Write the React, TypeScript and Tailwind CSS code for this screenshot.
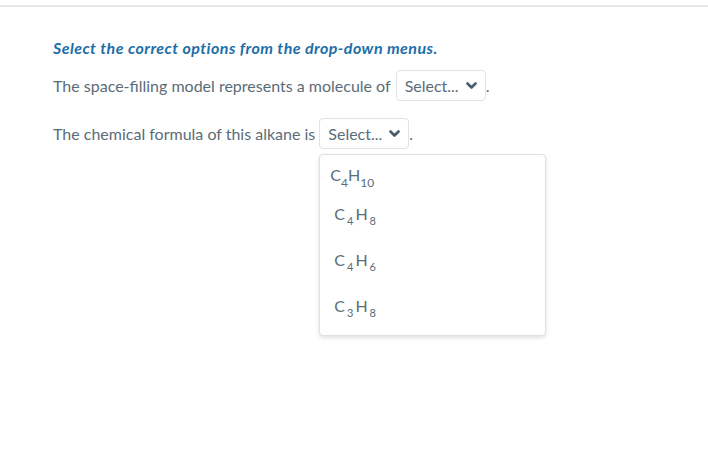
function Formula({ c, h, spaced }: { c: string; h: string; spaced?: boolean }) {
  if (!spaced) {
    return (
      <span>
        C<sub className="text-[12px] align-[-3px]">{c}</sub>H<sub className="text-[12px] align-[-3px]">{h}</sub>
      </span>
    );
  }
  return (
    <span>
      C<sub className="text-[11px] align-[-2px] ml-[2px] mr-[2px]">{c}</sub>H<sub className="text-[11px] align-[-2px] ml-[2px]">{h}</sub>
    </span>
  );
}

function Chevron() {
  return (
    <svg width="11" height="8" viewBox="0 0 11 8" className="text-[#4b5b67]">
      <polyline points="1.5,1.5 5.5,5.5 9.5,1.5" fill="none" stroke="currentColor" strokeWidth="2.6" strokeLinecap="round" strokeLinejoin="round" />
    </svg>
  );
}

function SelectBox() {
  return (
    <span className="inline-flex items-center justify-between w-[90px] h-[31px] pl-[8px] pr-[8px] border border-[#e3e3e3] rounded-[4px] bg-white text-[#5b6c79]">
      Select...
      <Chevron />
    </span>
  );
}

export default function App() {
  return (
    <div className="w-[708px] h-[466px] bg-white font-['Lato',sans-serif]">
      <div className="pt-[5px]">
        <div className="h-[2px] bg-[#e8e8e8]" />
      </div>
      <div className="pl-[53px] pt-[31px]">
        <h2 className="text-[16px] font-bold italic tracking-[0.45px] text-[#1e6ea7] leading-[20px]">
          Select the correct options from the drop-down menus.
        </h2>
        <p className="mt-[12px] text-[16px] text-[#5b6c79] flex items-center">
          The space-filling model represents a molecule of
          <span className="ml-[5px]">
            <SelectBox />
          </span>
          <span>.</span>
        </p>
        <p className="mt-[17px] text-[16px] text-[#5b6c79] flex items-center">
          The chemical formula of this alkane is
          <span className="relative ml-[4px]">
            <SelectBox />
            <div className="absolute left-0 top-[36px] w-[227px] h-[182px] border border-[#e0e0e0] rounded-[4px] bg-white shadow-[0_2px_4px_rgba(0,0,0,0.12)] text-[#5b6c79] text-[16px]">
              <div className="absolute left-[10px] top-[8px]">
                <Formula c="4" h="10" />
              </div>
              <div className="absolute left-[14px] top-[47px]">
                <Formula c="4" h="8" spaced />
              </div>
              <div className="absolute left-[14px] top-[93px]">
                <Formula c="4" h="6" spaced />
              </div>
              <div className="absolute left-[14px] top-[139px]">
                <Formula c="3" h="8" spaced />
              </div>
            </div>
          </span>
          <span>.</span>
        </p>
      </div>
    </div>
  );
}
